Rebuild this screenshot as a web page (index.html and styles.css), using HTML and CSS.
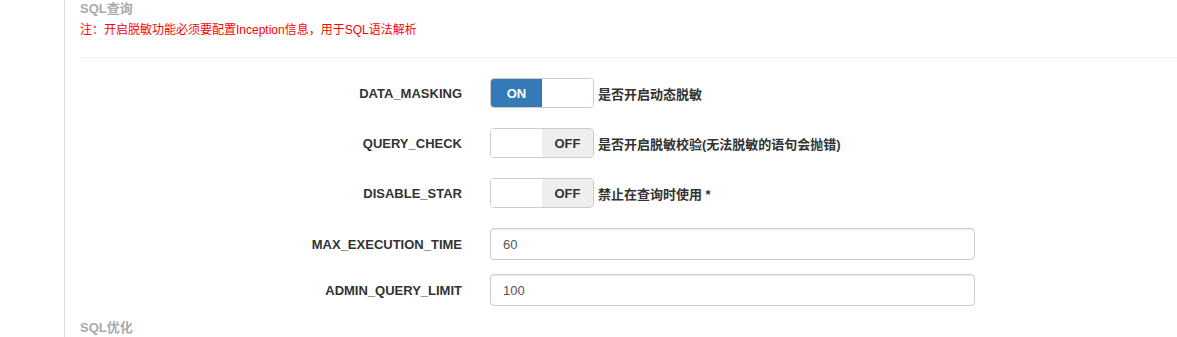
FILE: index.html
```html
<!DOCTYPE html>
<html lang="zh-CN">
<head>
    <meta charset="UTF-8">
    <meta name="viewport" content="width=device-width, initial-scale=1.0">
    <title>系统配置</title>
    <link rel="stylesheet" href="styles.css">
</head>
<body>
    <div class="page">
        <div class="content">
            <h4 class="section-title">SQL查询</h4>
            <p class="note">注：开启脱敏功能必须要配置Inception信息，用于SQL语法解析</p>
            <hr class="divider">

            <div class="form">
                <div class="form-row switch-row">
                    <label class="form-label">DATA_MASKING</label>
                    <div class="form-control-wrap">
                        <div class="switch is-on">
                            <span class="switch-on">ON</span>
                            <span class="switch-blank"></span>
                        </div>
                        <span class="help">是否开启动态脱敏</span>
                    </div>
                </div>

                <div class="form-row switch-row">
                    <label class="form-label">QUERY_CHECK</label>
                    <div class="form-control-wrap">
                        <div class="switch">
                            <span class="switch-blank"></span>
                            <span class="switch-off">OFF</span>
                        </div>
                        <span class="help">是否开启脱敏校验(无法脱敏的语句会抛错)</span>
                    </div>
                </div>

                <div class="form-row switch-row">
                    <label class="form-label">DISABLE_STAR</label>
                    <div class="form-control-wrap">
                        <div class="switch">
                            <span class="switch-blank"></span>
                            <span class="switch-off">OFF</span>
                        </div>
                        <span class="help">禁止在查询时使用 *</span>
                    </div>
                </div>

                <div class="form-row input-row">
                    <label class="form-label">MAX_EXECUTION_TIME</label>
                    <div class="form-control-wrap">
                        <input type="text" class="text-input" value="60">
                    </div>
                </div>

                <div class="form-row input-row">
                    <label class="form-label">ADMIN_QUERY_LIMIT</label>
                    <div class="form-control-wrap">
                        <input type="text" class="text-input" value="100">
                    </div>
                </div>
            </div>

            <h4 class="section-title next">SQL优化</h4>
        </div>
    </div>
</body>
</html>
```

FILE: styles.css
```css
* {
    margin: 0;
    padding: 0;
    box-sizing: border-box;
}

html, body {
    height: 100%;
    overflow: hidden;
}

body {
    font-family: 'Liberation Sans', Arial, 'Noto Sans CJK SC', sans-serif;
    background: #fff;
    color: #333;
}

.page {
    padding-left: 64px;
    min-height: 100vh;
}

.content {
    border-left: 1px solid #ddd;
    padding-left: 15px;
    min-height: 100vh;
}

.section-title {
    font-size: 13px;
    font-weight: bold;
    line-height: 18px;
    color: #aaa;
    margin-bottom: 4px;
}

.section-title.next {
    margin-top: 13px;
}

.note {
    font-size: 12px;
    line-height: 17px;
    color: #f00;
}

.divider {
    border: none;
    border-top: 1px solid #eee;
    margin-top: 18px;
    margin-bottom: 20px;
}

.form-row {
    display: grid;
    grid-template-columns: 382px 1fr;
    column-gap: 28px;
    align-items: center;
}

.form-row + .form-row {
    margin-top: 20px;
}

.input-row + .input-row {
    margin-top: 14px;
}

.form-label {
    text-align: right;
    font-size: 13px;
    font-weight: bold;
    color: #333;
}

.form-control-wrap {
    display: flex;
    align-items: center;
    gap: 4px;
}

.switch {
    display: flex;
    width: 104px;
    height: 30px;
    border: 1px solid #ccc;
    border-radius: 4px;
    overflow: hidden;
}

.switch span {
    width: 50%;
    display: flex;
    align-items: center;
    justify-content: center;
    font-size: 13px;
    font-weight: bold;
}

.switch-on {
    background: #337ab7;
    color: #fff;
}

.switch-off {
    background: #eee;
    color: #333;
}

.switch-blank {
    background: #fff;
}

.help {
    font-size: 13px;
    font-weight: bold;
    color: #333;
}

.text-input {
    width: 485px;
    height: 32px;
    padding: 0 12px;
    border: 1px solid #ccc;
    border-radius: 4px;
    font-family: inherit;
    font-size: 13px;
    color: #555;
    outline: none;
    box-shadow: inset 0 1px 1px rgba(0,0,0,0.075);
}
```
